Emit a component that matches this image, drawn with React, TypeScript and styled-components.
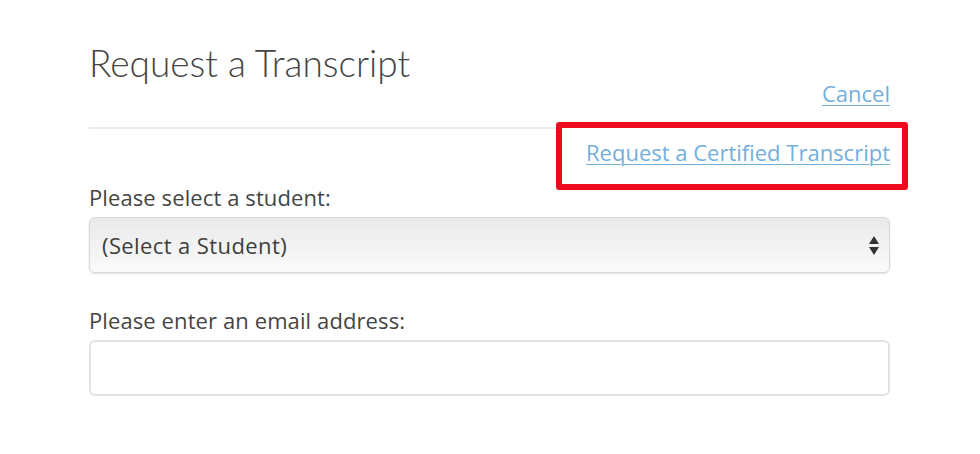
import React from "react";
import styled, { createGlobalStyle } from "styled-components";

const Global = createGlobalStyle`
  html, body { margin: 0; padding: 0; background: #fff; }
  body { font-family: "Open Sans", "Lato", sans-serif; color: #444; }
`;

const Page = styled.div`
  width: 801px;
  padding: 40px 0 0 89px;
`;

const Title = styled.h1`
  margin: 0;
  font-family: "Lato", "Open Sans", sans-serif;
  font-weight: 300;
  font-size: 37px;
  line-height: 45px;
  color: #454545;
`;

const CancelRow = styled.div`
  display: flex;
  justify-content: flex-end;
  margin-top: -6px;
`;

const Link = styled.a`
  font-family: "Open Sans", sans-serif;
  font-size: 22px;
  line-height: 28px;
  color: #74aedb;
  text-decoration: underline;
  text-decoration-thickness: 1px;
  text-underline-offset: 3px;
  cursor: pointer;
`;

const Rule = styled.hr`
  margin: 20px 0 0;
  border: 0;
  border-top: 2px solid #ebebeb;
`;

const CertRow = styled.div`
  display: flex;
  justify-content: flex-end;
  margin-right: -18px;
  margin-top: -7px;
`;

const Highlight = styled.div`
  position: relative;
  background: #fff;
  border: 6px solid #ee0a1e;
  border-radius: 3px;
  padding: 10px 12px 18px 24px;
`;

const Field = styled.div<{ $gap: number }>`
  margin-top: ${(p) => p.$gap}px;
  display: flex;
  flex-direction: column;
  gap: 7px;
`;

const Label = styled.label`
  font-size: 22px;
  line-height: 26px;
  letter-spacing: 0.1px;
  color: #454545;
`;

const SelectBox = styled.div`
  height: 54px;
  border: 1px solid #d9d9d9;
  border-radius: 6px;
  background: linear-gradient(#e9e9e9, #fbfbfb);
  box-shadow: 0 1px 2px rgba(0, 0, 0, 0.12);
  display: flex;
  align-items: center;
  padding: 0 10px 0 12px;
  font-size: 22px;
  letter-spacing: 0.4px;
  color: #3d3d3d;
`;

const SelectText = styled.span`
  flex: 1;
`;

const Arrows = styled.svg`
  width: 10px;
  height: 19px;
`;

const Input = styled.input`
  box-sizing: border-box;
  height: 56px;
  border: 2px solid #e2e2e2;
  border-radius: 6px;
  background: #fff;
  font-size: 22px;
  padding: 0 12px;
  outline: none;
`;

export default function App() {
  return (
    <>
      <Global />
      <Page>
        <Title>Request a Transcript</Title>
        <CancelRow>
          <Link>Cancel</Link>
        </CancelRow>
        <Rule />
        <CertRow>
          <Highlight>
            <Link>Request a Certified Transcript</Link>
          </Highlight>
        </CertRow>
        <Field $gap={-6}>
          <Label>Please select a student:</Label>
          <SelectBox>
            <SelectText>(Select a Student)</SelectText>
            <Arrows viewBox="0 0 10 19">
              <path d="M5 0 L10 8 L0 8 Z" fill="#333" />
              <path d="M0 11 L10 11 L5 19 Z" fill="#333" />
            </Arrows>
          </SelectBox>
        </Field>
        <Field $gap={34}>
          <Label>Please enter an email address:</Label>
          <Input type="email" />
        </Field>
      </Page>
    </>
  );
}
